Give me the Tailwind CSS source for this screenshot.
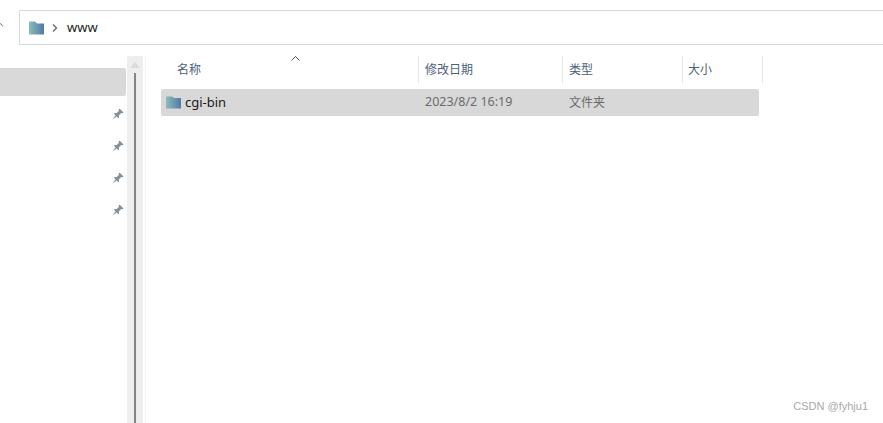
<!DOCTYPE html>
<html lang="zh-CN">
<head>
    <meta charset="UTF-8">
    <title>www</title>
    <script src="https://cdn.jsdelivr.net/npm/@tailwindcss/browser@4"></script>
</head>
<body class="bg-white overflow-hidden font-['Noto_Sans','Noto_Sans_CJK_SC',sans-serif] text-[13px]">
<div class="w-[883px] h-[423px] flex flex-col relative overflow-hidden">

    <!-- barra de endereco -->
    <div class="h-[56px] flex pt-[10px] shrink-0">
        <div class="w-[19px] pt-[12px] shrink-0">
            <svg width="6" height="6" viewBox="0 0 6 6" class="-ml-[2px]"><path d="M0 4.5 L2.5 1.5 L5 4.5" fill="none" stroke="#777" stroke-width="1"/></svg>
        </div>
        <div class="flex-1 h-[35px] border border-[#d9d9d9] border-r-0 flex items-center pl-[9px]">
            <svg width="15" height="14" viewBox="0 0 15 14">
                <defs><linearGradient id="pastaA" x1="0" x2="1" y1="0" y2="0"><stop offset="0" stop-color="#8abdb9"/><stop offset="1" stop-color="#5378a8"/></linearGradient></defs>
                <path d="M0 0.5 H6 L8 2.5 H15 V13.5 H0 Z" fill="url(#pastaA)"/>
            </svg>
            <svg width="6" height="8" viewBox="0 0 6 8" class="ml-[8px]"><path d="M1 0.5 L4.5 4 L1 7.5" fill="none" stroke="#666" stroke-width="1.3"/></svg>
            <span class="ml-[9px] text-[#222] leading-none">www</span>
        </div>
    </div>

    <div class="flex flex-1 min-h-0">
        <!-- painel lateral -->
        <div class="w-[127px] shrink-0 pt-[12px]">
            <div class="h-[28px] w-[126px] bg-[#d9d9d9] rounded-r-[2px]"></div>
            <ul class="pt-[2px]">
                <li class="h-[32px] flex items-center justify-end pr-[3px]"><svg width="12" height="12" viewBox="0 0 12 12"><path d="M7.5 0.5 L11.5 4.5 L10.3 5.3 L9.3 5 L7 7.3 L7 9.5 L6 10 L2 6 L2.5 5 L4.7 5 L7 2.7 L6.7 1.7 Z M3.6 7.2 L0.5 11.5 L4.8 8.4 Z" fill="#868e96"/></svg></li>
                <li class="h-[32px] flex items-center justify-end pr-[3px]"><svg width="12" height="12" viewBox="0 0 12 12"><path d="M7.5 0.5 L11.5 4.5 L10.3 5.3 L9.3 5 L7 7.3 L7 9.5 L6 10 L2 6 L2.5 5 L4.7 5 L7 2.7 L6.7 1.7 Z M3.6 7.2 L0.5 11.5 L4.8 8.4 Z" fill="#868e96"/></svg></li>
                <li class="h-[32px] flex items-center justify-end pr-[3px]"><svg width="12" height="12" viewBox="0 0 12 12"><path d="M7.5 0.5 L11.5 4.5 L10.3 5.3 L9.3 5 L7 7.3 L7 9.5 L6 10 L2 6 L2.5 5 L4.7 5 L7 2.7 L6.7 1.7 Z M3.6 7.2 L0.5 11.5 L4.8 8.4 Z" fill="#868e96"/></svg></li>
                <li class="h-[32px] flex items-center justify-end pr-[3px]"><svg width="12" height="12" viewBox="0 0 12 12"><path d="M7.5 0.5 L11.5 4.5 L10.3 5.3 L9.3 5 L7 7.3 L7 9.5 L6 10 L2 6 L2.5 5 L4.7 5 L7 2.7 L6.7 1.7 Z M3.6 7.2 L0.5 11.5 L4.8 8.4 Z" fill="#868e96"/></svg></li>
            </ul>
        </div>

        <!-- scrollbar -->
        <div class="w-[16px] shrink-0 bg-[#eeeeee] flex flex-col items-center pt-[6px]">
            <svg width="10" height="6" viewBox="0 0 10 6"><path d="M0 6 L5 0 L10 6 Z" fill="#dcdcdc"/></svg>
            <div class="w-[2px] flex-1 bg-[#858585] mt-[5px]"></div>
        </div>
        <div class="w-[2px] shrink-0"></div>
        <div class="w-px shrink-0 bg-[#f3f3f3]"></div>

        <!-- lista de arquivos -->
        <div class="flex-1 relative pl-[15px]">
            <svg width="9" height="5" viewBox="0 0 9 5" class="absolute left-[145px] top-0"><path d="M0.5 4.5 L4.5 0.5 L8.5 4.5" fill="none" stroke="#555" stroke-width="1"/></svg>
            <div class="h-[27px] flex text-[#4c607a] text-[12px]">
                <div class="w-[257px] pl-[16px] pt-[1px] flex items-center">名称</div>
                <div class="w-[144px] pl-[6px] pt-[1px] flex items-center border-l border-[#e5e5e5]">修改日期</div>
                <div class="w-[120px] pl-[6px] pt-[1px] flex items-center border-l border-[#e5e5e5]">类型</div>
                <div class="w-[81px] pl-[5px] pt-[1px] flex items-center border-x border-[#e5e5e5]">大小</div>
            </div>
            <div class="mt-[6px] h-[27px] w-[598px] bg-[#d8d8d8] rounded-[2px] flex items-center">
                <div class="w-[257px] flex items-center pl-[5px]">
                    <svg width="15" height="13" viewBox="0 0 15 13">
                        <defs><linearGradient id="pastaB" x1="0" x2="1" y1="0" y2="0"><stop offset="0" stop-color="#8abdb9"/><stop offset="1" stop-color="#5378a8"/></linearGradient></defs>
                        <path d="M0 0.5 H6 L8 2 H15 V12.5 H0 Z" fill="url(#pastaB)"/>
                    </svg>
                    <span class="ml-[4px] text-[#1a1a1a]">cgi-bin</span>
                </div>
                <div class="w-[144px] pl-[7px] text-[#6b6b6b] text-[12.5px]">2023/8/2 16:19</div>
                <div class="pl-[7px] text-[#6b6b6b] text-[12px]">文件夹</div>
            </div>
        </div>
    </div>

    <div class="absolute right-[15px] top-[401px] text-[11px] leading-none text-[#a8a8a8] font-['Liberation_Sans',sans-serif]">CSDN @fyhju1</div>
</div>
</body>
</html>
